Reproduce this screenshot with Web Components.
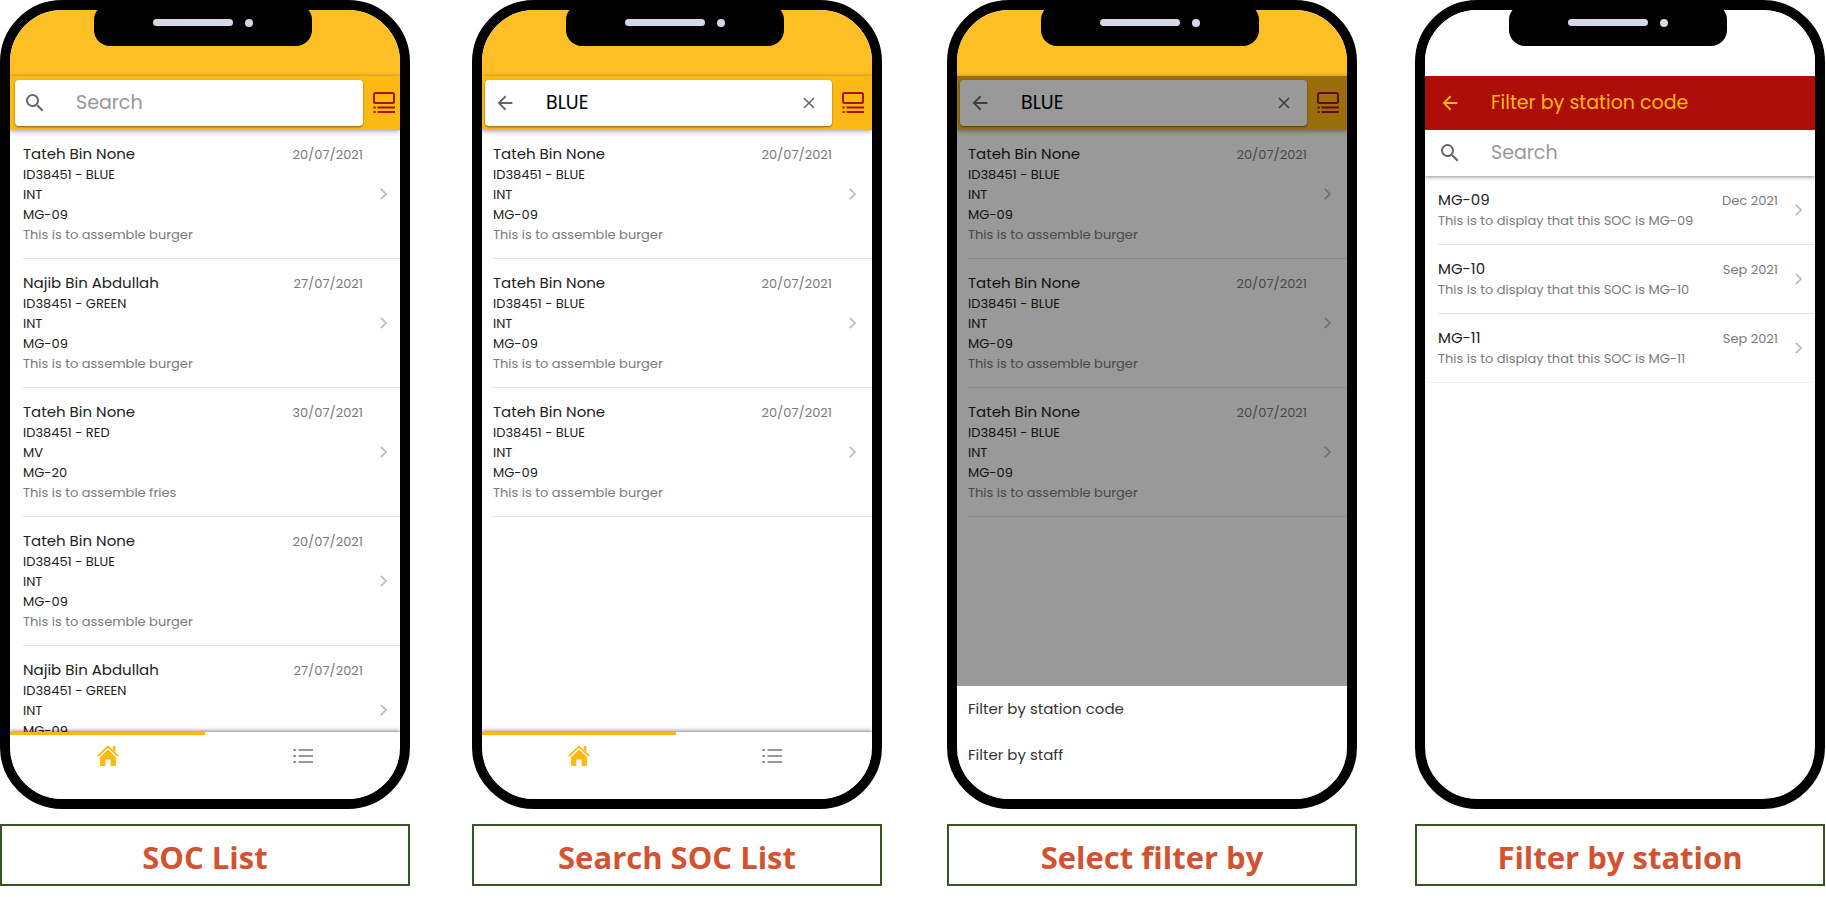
<!DOCTYPE html>
<html lang="en">
<head>
<meta charset="utf-8">
<title>SOC screens</title>
<style>
    body{
        margin: 0;
        background: #fff;
        font-family: Poppins, "Open Sans", sans-serif;
        --color-yellow: #fdb913;
        --color-status: #febe25;
        --color-red: #ad0e08;
        --color-text: #222;
        --color-muted: #7a7a7a;
        --lead: 5px;
        --trail: 37px;
    }
    .narrow{
        --lead: 3px;
        --trail: 40px;
    }
    .board{
        display: grid;
        grid-template-columns: 410fr 62fr 410fr 65fr 410fr 58fr 410fr 1fr;
    }
    .board > :nth-child(2){ grid-column: 3; }
    .board > :nth-child(3){ grid-column: 5; }
    .board > :nth-child(4){ grid-column: 7; }
</style>
</head>
<body>
<main class="board">
    <soc-screen caption="SOC List">
        <soc-toolbar slot="top">
            <soc-search icon="search"></soc-search>
        </soc-toolbar>
        <soc-item name="Tateh Bin None" date="20/07/2021" lines="ID38451 - BLUE|INT|MG-09">This is to assemble burger</soc-item>
        <soc-item name="Najib Bin Abdullah" date="27/07/2021" lines="ID38451 - GREEN|INT|MG-09">This is to assemble burger</soc-item>
        <soc-item name="Tateh Bin None" date="30/07/2021" lines="ID38451 - RED|MV|MG-20">This is to assemble fries</soc-item>
        <soc-item name="Tateh Bin None" date="20/07/2021" lines="ID38451 - BLUE|INT|MG-09">This is to assemble burger</soc-item>
        <soc-item name="Najib Bin Abdullah" date="27/07/2021" lines="ID38451 - GREEN|INT|MG-09">This is to assemble burger</soc-item>
        <soc-tabs slot="bottom"></soc-tabs>
    </soc-screen>

    <soc-screen class="narrow" caption="Search SOC List">
        <soc-toolbar slot="top">
            <soc-search icon="back" value="BLUE"></soc-search>
        </soc-toolbar>
        <soc-item name="Tateh Bin None" date="20/07/2021" lines="ID38451 - BLUE|INT|MG-09">This is to assemble burger</soc-item>
        <soc-item name="Tateh Bin None" date="20/07/2021" lines="ID38451 - BLUE|INT|MG-09">This is to assemble burger</soc-item>
        <soc-item name="Tateh Bin None" date="20/07/2021" lines="ID38451 - BLUE|INT|MG-09">This is to assemble burger</soc-item>
        <soc-tabs slot="bottom"></soc-tabs>
    </soc-screen>

    <soc-screen class="narrow" caption="Select filter by">
        <soc-toolbar slot="top">
            <soc-search icon="back" value="BLUE"></soc-search>
        </soc-toolbar>
        <soc-item name="Tateh Bin None" date="20/07/2021" lines="ID38451 - BLUE|INT|MG-09">This is to assemble burger</soc-item>
        <soc-item name="Tateh Bin None" date="20/07/2021" lines="ID38451 - BLUE|INT|MG-09">This is to assemble burger</soc-item>
        <soc-item name="Tateh Bin None" date="20/07/2021" lines="ID38451 - BLUE|INT|MG-09">This is to assemble burger</soc-item>
        <soc-sheet slot="overlay">
            <soc-option>Filter by station code</soc-option>
            <soc-option>Filter by staff</soc-option>
        </soc-sheet>
    </soc-screen>

    <soc-screen plain caption="Filter by station">
        <soc-title slot="top">Filter by station code</soc-title>
        <soc-search slot="top" icon="search" flat></soc-search>
        <soc-item name="MG-09" date="Dec 2021">This is to display that this SOC is MG-09</soc-item>
        <soc-item name="MG-10" date="Sep 2021">This is to display that this SOC is MG-10</soc-item>
        <soc-item last name="MG-11" date="Sep 2021">This is to display that this SOC is MG-11</soc-item>
    </soc-screen>
</main>

<script>
const icons = {
    search: `<svg viewBox="0 0 24 24" width="24" height="24" fill="currentColor"><path d="M15.5 14h-.79l-.28-.27A6.47 6.47 0 0 0 16 9.5 6.5 6.5 0 1 0 9.5 16c1.61 0 3.09-.59 4.23-1.57l.27.28v.79l5 4.99L20.49 19l-4.99-5zm-6 0C7.01 14 5 11.99 5 9.5S7.01 5 9.5 5 14 7.01 14 9.5 11.99 14 9.5 14z"/></svg>`,
    back: `<svg viewBox="-1 -1 26 26" width="24" height="24" fill="currentColor"><path d="M20 11H7.83l5.59-5.59L12 4l-8 8 8 8 1.41-1.41L7.83 13H20v-2z"/></svg>`,
    close: `<svg viewBox="0 0 18 18" width="18" height="18" fill="none" stroke="currentColor" stroke-width="1.5"><path d="M4 4l10 10M14 4L4 14"/></svg>`,
    chevron: `<svg viewBox="0 0 7 12" width="7" height="12" fill="none" stroke="currentColor" stroke-width="1.7"><path d="M.8.8L6 6 .8 11.2"/></svg>`,
    filter: `<svg viewBox="0 0 22 22" width="22" height="22" fill="none" stroke="currentColor" stroke-width="2"><rect x="1" y="1" width="20" height="10" rx="1.5"/><path d="M4.500 15.500H22M4.500 20H22M.5 15.500h2.200M.5 20h2.200" stroke-width="1.8"/></svg>`,
    home: `<svg viewBox="0 0 22 22" width="22" height="22" fill="currentColor"><path d="M15.9 1h2.6v6l-2.6-2.4z"/><path d="M.8 11.2L11 1.6l10.2 9.6" fill="none" stroke="currentColor" stroke-width="1.8"/><path d="M11 4.6l8.1 7.6v7.3c0 .9-.6 1.5-1.5 1.5h-4v-5.8c0-.4-.2-.7-.6-.7H9c-.4 0-.6.3-.6.7V21h-4c-.9 0-1.5-.6-1.5-1.5v-7.3z"/></svg>`,
    list: `<svg viewBox="0 0 22 22" width="22" height="22" fill="none" stroke="currentColor" stroke-width="1.4"><path d="M6.500 5H21M6.500 11H21M6.500 17H21"/><path d="M1.500 5h2.200M1.500 11h2.200M1.500 17h2.200" stroke-width="2"/></svg>`
};

const baseStyle = `
    *{
        box-sizing: border-box;
    }
    button, input{
        margin: 0;
        padding: 0;
        border: 0;
        background: none;
        color: inherit;
        font: inherit;
    }
    button{
        cursor: pointer;
    }
    svg{
        display: block;
    }
`;

class SocElement extends HTMLElement{
    connectedCallback(){
        if (this.shadowRoot) return;
        const template = document.createElement('template');
        template.innerHTML = `<style>${baseStyle}${this.css()}</style>${this.html()}`;
        this.attachShadow({mode: 'open'})
            .appendChild(template.content.cloneNode(true));
    }
}

class SocScreen extends SocElement{
    css(){
        return `
            :host{
                display: block;
                min-width: 0;
            }
            .phone{
                position: relative;
                display: flex;
                flex-direction: column;
                aspect-ratio: 410 / 809;
                min-height: 0;
                border: 10px solid #000;
                border-radius: 62px;
                overflow: hidden;
                background: #fff;
            }
            .status{
                flex: none;
                height: 66px;
                background: var(--color-status);
            }
            :host([plain]) .status{
                background: #fff;
            }
            /* sits over the status bar */
            .notch{
                position: absolute;
                top: -6px;
                left: 84px;
                width: 218px;
                height: 42px;
                padding: 15px 0 0 59px;
                display: flex;
                gap: 12px;
                border-radius: 16px;
                background: #000;
            }
            .speaker{
                width: 80px;
                height: 7px;
                border-radius: 4px;
                background: #d5d9e6;
            }
            .camera{
                width: 8px;
                height: 8px;
                border-radius: 50%;
                background: #d5d9e6;
            }
            .view{
                position: relative;
                flex: 1;
                min-height: 0;
                display: flex;
                flex-direction: column;
            }
            .list{
                flex: 1;
                min-height: 0;
                overflow: hidden;
            }
            h2{
                margin: 15px 0 0;
                padding: 4px 0 0;
                border: 2px solid #375623;
                font: bold 31px/54px "Segoe UI", "Open Sans", sans-serif;
                text-align: center;
                color: #d35230;
            }
        `;
    }

    html(){
        return `
            <div class="phone">
                <div class="status"></div>
                <div class="notch"><span class="speaker"></span><span class="camera"></span></div>
                <div class="view">
                    <slot name="top"></slot>
                    <div class="list" role="list"><slot></slot></div>
                    <slot name="bottom"></slot>
                    <slot name="overlay"></slot>
                </div>
            </div>
            <h2>${this.getAttribute('caption')}</h2>
        `;
    }
}

class SocToolbar extends SocElement{
    css(){
        return `
            :host{
                flex: none;
                display: flex;
                align-items: center;
                height: 54px;
                padding-left: var(--lead);
                box-sizing: border-box;
                background: var(--color-yellow);
                box-shadow: 0 1px 5px rgba(0, 0, 0, 0.4);
                z-index: 1;
            }
            ::slotted(*){
                flex: 1;
                min-width: 0;
            }
            .action{
                width: var(--trail);
                padding-right: calc(var(--trail) - 32px);
                display: flex;
                justify-content: flex-end;
                color: var(--color-red);
            }
        `;
    }

    html(){
        return `
            <slot></slot>
            <div class="action"><button aria-label="Filter">${icons.filter}</button></div>
        `;
    }
}

class SocSearch extends SocElement{
    css(){
        return `
            :host{
                display: flex;
                align-items: center;
                gap: 29px;
                height: 46px;
                padding: 0 14px 0 8px;
                box-sizing: border-box;
                border-radius: 4px;
                background: #fff;
                color: #666;
                box-shadow: 0 1px 2px rgba(0, 0, 0, 0.5);
            }
            :host([flat]){
                flex: none;
                padding-left: 13px;
                border-radius: 0;
                box-shadow: 0 1px 4px rgba(0, 0, 0, 0.45);
            }
            input{
                flex: 1;
                min-width: 0;
                outline: 0;
                font-size: 19px;
                line-height: 28px;
                color: #000;
            }
            input::placeholder{
                color: #999;
                opacity: 1;
            }
        `;
    }

    html(){
        const icon = this.getAttribute('icon');
        const value = this.getAttribute('value') || '';
        const lead = icon === 'back'
            ? `<button aria-label="Back">${icons.back}</button>`
            : icons.search;
        return `
            ${lead}
            <input type="text" aria-label="Search" placeholder="Search" value="${value}">
            ${value ? `<button aria-label="Clear">${icons.close}</button>` : ''}
        `;
    }
}

class SocTitle extends SocElement{
    css(){
        return `
            :host{
                flex: none;
                display: flex;
                align-items: center;
                gap: 29px;
                height: 54px;
                padding-left: 13px;
                box-sizing: border-box;
                background: var(--color-red);
                color: #fdb913;
                z-index: 1;
            }
            h1{
                margin: 0;
                font-size: 19px;
                line-height: 28px;
                font-weight: 400;
            }
        `;
    }

    html(){
        return `
            <button aria-label="Back">${icons.back}</button>
            <h1><slot></slot></h1>
        `;
    }
}

class SocItem extends SocElement{
    css(){
        return `
            :host{
                display: block;
                padding-left: calc(var(--lead) + 8px);
            }
            a{
                display: flex;
                align-items: center;
                border-bottom: 1px solid #e4e4e4;
                color: var(--color-text);
                text-decoration: none;
            }
            :host([last]){
                border-bottom: 1px solid #f0f0f0;
            }
            :host([last]) a{
                border: 0;
            }
            .text{
                flex: 1;
                min-width: 0;
                padding: 13px 0;
            }
            .head{
                display: flex;
                justify-content: space-between;
                align-items: baseline;
            }
            .name{
                font-size: 15px;
                line-height: 22px;
            }
            .date{
                font-size: 13px;
                line-height: 16px;
                color: var(--color-muted);
            }
            p{
                margin: 0;
                font-size: 13px;
                line-height: 20px;
            }
            .note{
                color: var(--color-muted);
            }
            .more{
                width: var(--trail);
                padding-right: calc(var(--trail) - 24px);
                display: flex;
                justify-content: flex-end;
                color: #bbb;
            }
        `;
    }

    html(){
        this.setAttribute('role', 'listitem');
        const lines = (this.getAttribute('lines') || '').split('|').filter(Boolean);
        return `
            <a href="#">
                <div class="text">
                    <div class="head">
                        <span class="name">${this.getAttribute('name')}</span>
                        <span class="date">${this.getAttribute('date')}</span>
                    </div>
                    ${lines.map(line => `<p>${line}</p>`).join('')}
                    <p class="note"><slot></slot></p>
                </div>
                <span class="more">${icons.chevron}</span>
            </a>
        `;
    }
}

class SocTabs extends SocElement{
    css(){
        return `
            :host{
                flex: none;
                display: flex;
                height: 67px;
                padding-right: calc(var(--trail) - 37px);
                box-sizing: border-box;
                background: #fff;
                box-shadow: 0 -1px 4px rgba(0, 0, 0, 0.5);
                z-index: 1;
            }
            button{
                flex: 1;
                display: flex;
                justify-content: center;
                align-items: flex-start;
                padding-top: 10px;
                border-top: 3px solid transparent;
                color: #777;
            }
            .active{
                border-color: var(--color-yellow);
                color: var(--color-yellow);
            }
        `;
    }

    html(){
        return `
            <button class="active" aria-label="Home">${icons.home}</button>
            <button aria-label="List">${icons.list}</button>
        `;
    }
}

class SocSheet extends SocElement{
    css(){
        return `
            :host{
                position: absolute;
                inset: 0;
                z-index: 2;
                display: flex;
                flex-direction: column;
                justify-content: flex-end;
                background: rgba(0, 0, 0, 0.4);
            }
            .panel{
                padding-bottom: 21px;
                background: #fff;
            }
        `;
    }

    html(){
        return `<div class="panel"><slot></slot></div>`;
    }
}

class SocOption extends SocElement{
    css(){
        return `
            :host{
                display: block;
            }
            button{
                width: 100%;
                padding-left: calc(var(--lead) + 8px);
                font-size: 15px;
                line-height: 46px;
                text-align: left;
                color: #333;
            }
        `;
    }

    html(){
        return `<button><slot></slot></button>`;
    }
}

customElements.define('soc-screen', SocScreen);
customElements.define('soc-toolbar', SocToolbar);
customElements.define('soc-search', SocSearch);
customElements.define('soc-title', SocTitle);
customElements.define('soc-item', SocItem);
customElements.define('soc-tabs', SocTabs);
customElements.define('soc-sheet', SocSheet);
customElements.define('soc-option', SocOption);
</script>
</body>
</html>
